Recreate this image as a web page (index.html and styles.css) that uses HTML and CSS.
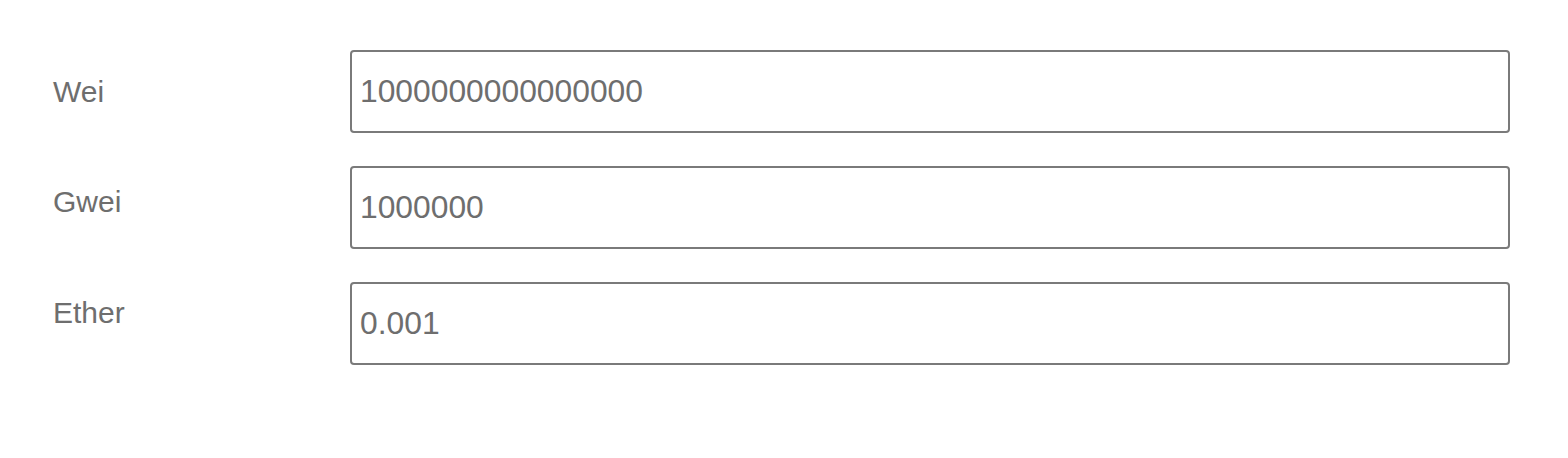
FILE: index.html
```html
<!DOCTYPE html>
<html>
<head>
<meta charset="utf-8">
<link rel="stylesheet" href="styles.css">
</head>
<body>
<div class="converter">
  <div class="labels">
    <label class="label" for="wei">Wei</label>
    <label class="label" for="gwei">Gwei</label>
    <label class="label" for="ether">Ether</label>
  </div>
  <div class="fields">
    <input class="field" id="wei" type="text" value="1000000000000000">
    <input class="field" id="gwei" type="text" value="1000000">
    <input class="field" id="ether" type="text" value="0.001">
  </div>
</div>
</body>
</html>
```
FILE: styles.css
```css
html, body {
  margin: 0;
  padding: 0;
  background: #ffffff;
}
body {
  font-family: "Liberation Sans", Arial, sans-serif;
  color: #6e6e6e;
}
.converter {
  display: flex;
  padding: 50px 0 0 53px;
}
.labels {
  display: flex;
  flex-direction: column;
  width: 297px;
  margin-top: -13.25px;
}
.label {
  display: block;
  height: 110.5px;
  line-height: 110.5px;
  font-size: 30px;
  color: #6e6e6e;
}
.fields {
  display: flex;
  flex-direction: column;
  gap: 33px;
}
.field {
  box-sizing: border-box;
  width: 1160px;
  height: 83px;
  margin: 0;
  padding: 0 8px;
  border: 2px solid #7a7a7a;
  border-radius: 4px;
  font-family: "Liberation Sans", Arial, sans-serif;
  font-size: 31.8px;
  color: #6e6e6e;
  background: #ffffff;
  outline: none;
}
```
